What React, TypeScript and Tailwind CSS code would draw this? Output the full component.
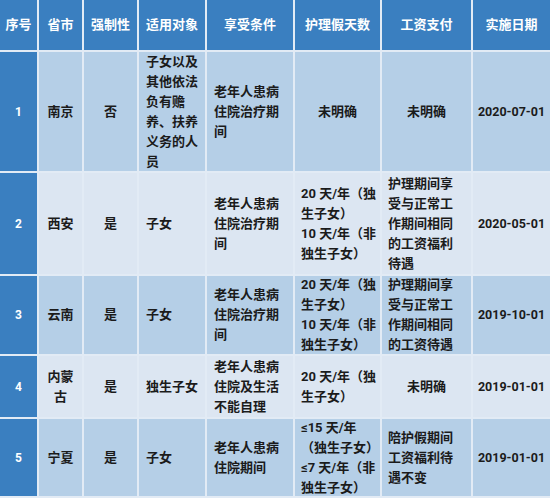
import React from "react";

type Cell = { lines: string[]; align?: "center" | "left"; pl?: string };

const headers = ["序号", "省市", "强制性", "适用对象", "享受条件", "护理假天数", "工资支付", "实施日期"];

const rows: { bg: string; cells: Cell[] }[] = [
  {
    bg: "bg-[#b5cfe7]",
    cells: [
      { lines: ["1"] },
      { lines: ["南京"] },
      { lines: ["否"] },
      { lines: ["子女以及", "其他依法", "负有赡", "养、扶养", "义务的人", "员"], align: "left", pl: "pl-[7px]" },
      { lines: ["老年人患病", "住院治疗期", "间"], align: "left", pl: "pl-[7px]" },
      { lines: ["未明确"] },
      { lines: ["未明确"] },
      { lines: ["2020-07-01"] },
    ],
  },
  {
    bg: "bg-[#dce6f2]",
    cells: [
      { lines: ["2"] },
      { lines: ["西安"] },
      { lines: ["是"] },
      { lines: ["子女"], align: "left", pl: "pl-[7px]" },
      { lines: ["老年人患病", "住院治疗期", "间"], align: "left", pl: "pl-[7px]" },
      { lines: ["20 天/年（独", "生子女）", "10 天/年（非", "独生子女）"], align: "left", pl: "pl-[6px]" },
      { lines: ["护理期间享", "受与正常工", "作期间相同", "的工资福利", "待遇"], align: "left", pl: "pl-[6px]" },
      { lines: ["2020-05-01"] },
    ],
  },
  {
    bg: "bg-[#b5cfe7]",
    cells: [
      { lines: ["3"] },
      { lines: ["云南"] },
      { lines: ["是"] },
      { lines: ["子女"], align: "left", pl: "pl-[7px]" },
      { lines: ["老年人患病", "住院治疗期", "间"], align: "left", pl: "pl-[7px]" },
      { lines: ["20 天/年（独", "生子女）", "10 天/年（非", "独生子女）"], align: "left", pl: "pl-[6px]" },
      { lines: ["护理期间享", "受与正常工", "作期间相同", "的工资待遇"], align: "left", pl: "pl-[6px]" },
      { lines: ["2019-10-01"] },
    ],
  },
  {
    bg: "bg-[#dce6f2]",
    cells: [
      { lines: ["4"] },
      { lines: ["内蒙", "古"] },
      { lines: ["是"] },
      { lines: ["独生子女"], align: "left", pl: "pl-[7px]" },
      { lines: ["老年人患病", "住院及生活", "不能自理"], align: "left", pl: "pl-[7px]" },
      { lines: ["20 天/年（独", "生子女）"], align: "left", pl: "pl-[6px]" },
      { lines: ["未明确"] },
      { lines: ["2019-01-01"] },
    ],
  },
  {
    bg: "bg-[#b5cfe7]",
    cells: [
      { lines: ["5"] },
      { lines: ["宁夏"] },
      { lines: ["是"] },
      { lines: ["子女"], align: "left", pl: "pl-[7px]" },
      { lines: ["老年人患病", "住院期间"], align: "left", pl: "pl-[7px]" },
      { lines: ["≤15 天/年", "（独生子女）", "≤7 天/年（非", "独生子女）"], align: "left", pl: "pl-[6px]" },
      { lines: ["陪护假期间", "工资福利待", "遇不变"], align: "left", pl: "pl-[6px]" },
      { lines: ["2019-01-01"] },
    ],
  },
];

const font = { fontFamily: "Roboto, 'Noto Sans CJK SC', sans-serif" };

export default function App() {
  return (
    <div
      className="w-[550px] h-[498px] grid grid-cols-[37px_43px_53px_66px_86px_85px_89px_77px] grid-rows-[50px_119px_101px_78px_61px_77px] gap-[2px] bg-[#e2ebf5] pb-[2px] overflow-hidden"
      style={font}
    >
      {headers.map((h) => (
        <div
          key={h}
          className="bg-[#3a7fc0] text-white font-bold text-[13px] flex items-center justify-center whitespace-nowrap"
        >
          {h}
        </div>
      ))}
      {rows.map((r, ri) =>
        r.cells.map((c, ci) => {
          if (ci === 0) {
            return (
              <div
                key={`${ri}-${ci}`}
                className="bg-[#3a7fc0] text-white font-bold text-[12px] flex items-center justify-center"
              >
                {c.lines[0]}
              </div>
            );
          }
          const isDate = ci === 7;
          return (
            <div
              key={`${ri}-${ci}`}
              className={`${r.bg} flex items-center ${
                c.align === "left" ? `justify-start ${c.pl}` : "justify-center"
              } text-[#1b1b1b] font-bold ${isDate ? "text-[12.5px]" : "text-[13px]"} leading-[20px]`}
            >
              <div className={c.align === "left" ? "text-left" : "text-center"}>
                {c.lines.map((l, li) => (
                  <div key={li} className="whitespace-nowrap">
                    {l}
                  </div>
                ))}
              </div>
            </div>
          );
        })
      )}
    </div>
  );
}
